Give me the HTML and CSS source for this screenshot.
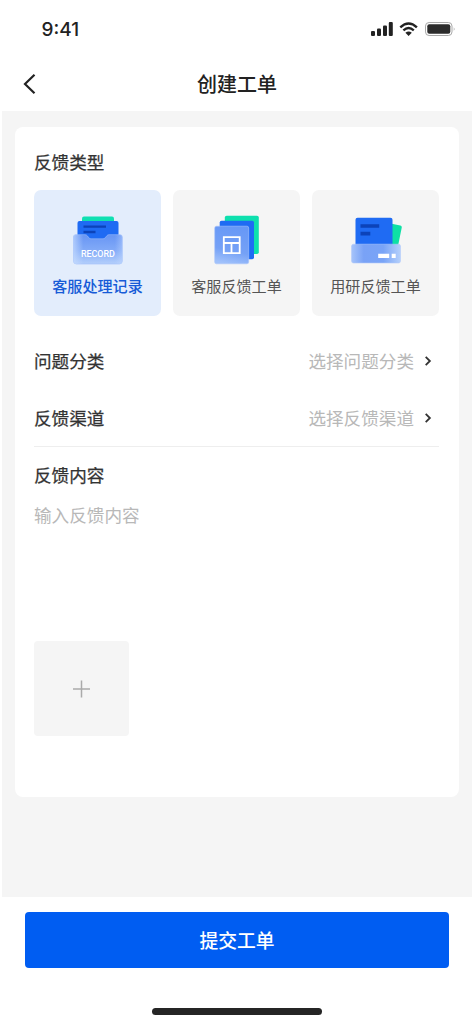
FILE: index.html
```html
<!DOCTYPE html>
<html lang="zh-CN">
<head>
<meta charset="utf-8">
<meta name="viewport" content="width=device-width, initial-scale=1">
<title>创建工单</title>
<link rel="stylesheet" href="styles.css">
</head>
<body>
<div class="screen">
  <header class="status">
    <span class="time">9:41</span>
    <svg class="status-icons" viewBox="370 20 86 18" width="86" height="18" aria-hidden="true">
      <g fill="#222">
        <rect x="371" y="31" width="4" height="5" rx="1.1"/>
        <rect x="377" y="28.5" width="4" height="7.5" rx="1.1"/>
        <rect x="383" y="25.5" width="4" height="10.5" rx="1.1"/>
        <rect x="388.8" y="22" width="4" height="14" rx="1.1"/>
        <path d="M405.4 32.7Q408.6 30.2 411.8 32.7L408.6 35.9Z"/>
      </g>
      <g fill="none" stroke="#222" stroke-width="2.4">
        <path d="M400.3 27.3Q408.6 19.6 416.9 27.3"/>
        <path d="M403.4 30.4Q408.6 25.8 413.8 30.4"/>
      </g>
      <rect x="425.5" y="22.5" width="26.5" height="13" rx="3.6" fill="none" stroke="#a8a8a8"/>
      <rect x="427.3" y="24.3" width="23" height="9.5" rx="2" fill="#2c2c2c"/>
      <path d="M453.8 27.2Q455.4 29 453.8 31Z" fill="#999"/>
    </svg>
  </header>
  <nav class="navbar">
    <svg class="back" viewBox="0 0 14 22" width="14" height="22" aria-hidden="true"><path d="M11.5 1.7L2 11L11.5 20.3"/></svg>
    <h1 class="title">创建工单</h1>
  </nav>
  <main class="content">
    <section class="card">
      <h2 class="label">反馈类型</h2>
      <div class="types">
        <button class="type active">
          <svg viewBox="71.5 214 52 52" width="52" height="52" aria-hidden="true">
            <defs>
              <linearGradient id="record" x1="0" y1="0" x2="0" y2="1"><stop offset="0" stop-color="#6795f4"/><stop offset=".55" stop-color="#83abf8"/><stop offset="1" stop-color="#b4cffb"/></linearGradient>
              <linearGradient id="edge"><stop offset="0" stop-color="#c8ddff" stop-opacity=".7"/><stop offset=".2" stop-color="#c8ddff" stop-opacity="0"/><stop offset=".85" stop-color="#c8ddff" stop-opacity="0"/><stop offset="1" stop-color="#c8ddff" stop-opacity=".4"/></linearGradient>
            </defs>
            <rect x="81.5" y="216.6" width="32" height="9" rx="2" fill="#10e0b2"/>
            <rect x="77" y="221" width="41" height="22" rx="2" fill="#1f6bf3"/>
            <path d="M83 226.7H105.5M83 232H95" stroke="#0c43b9" stroke-width="2.3"/>
            <path d="M75 234.7H84.5Q86 234.7 87 236L88.5 238Q89.3 238.8 90.5 238.8H102.5Q103.7 238.8 104.5 238L106.5 235.6Q107.2 234.7 108.5 234.7H119.5Q121.8 234.7 121.8 237V261Q121.8 264 118.8 264H76Q73 264 73 261V237Q73 234.7 75 234.7Z" fill="url(#record)" stroke="#9dbdfa" stroke-width=".6"/>
            <path d="M75 234.7H84.5Q86 234.7 87 236L88.5 238Q89.3 238.8 90.5 238.8H102.5Q103.7 238.8 104.5 238L106.5 235.6Q107.2 234.7 108.5 234.7H119.5Q121.8 234.7 121.8 237V261Q121.8 264 118.8 264H76Q73 264 73 261V237Q73 234.7 75 234.7Z" fill="url(#edge)"/>
            <text class="record-text" x="97.4" y="257" text-anchor="middle" textLength="34" lengthAdjust="spacingAndGlyphs">RECORD</text>
          </svg>
          <span class="type-name">客服处理记录</span>
        </button>
        <button class="type">
          <svg viewBox="210.5 214 52 52" width="52" height="52" aria-hidden="true">
            <defs><linearGradient id="sheet" x1=".6" y1="0" x2=".4" y2="1"><stop offset="0" stop-color="#6798f6"/><stop offset=".65" stop-color="#75a1f6"/><stop offset="1" stop-color="#a0c1fb"/></linearGradient></defs>
            <rect x="224.3" y="215.8" width="34" height="38.2" rx="1.8" fill="#0ee0ae"/>
            <rect x="219.2" y="220.8" width="34.3" height="38.4" rx="1.8" fill="#1f6bf3"/>
            <rect x="214.2" y="226.2" width="34" height="37.6" rx="1.8" fill="url(#sheet)" stroke="#a9c5fa" stroke-width=".6"/>
            <path d="M223.3 237.2H239.2V253.2H223.3ZM223.3 243H239.2M231 243V253.2" fill="none" stroke="#fff" stroke-width="1.8"/>
          </svg>
          <span class="type-name">客服反馈工单</span>
        </button>
        <button class="type">
          <svg viewBox="349.5 214 52 52" width="52" height="52" aria-hidden="true">
            <defs><linearGradient id="tray"><stop offset="0" stop-color="#a6c4fa"/><stop offset=".25" stop-color="#79a2f6"/><stop offset=".65" stop-color="#79a4f7"/><stop offset="1" stop-color="#b5d0fb"/></linearGradient></defs>
            <path d="M390 223.5L399.8 225.6Q401.6 226 401.2 227.8L397.5 246H388Z" fill="#0ee0a5"/>
            <rect x="355" y="217.8" width="37" height="30" rx="2" fill="#1f6bf3"/>
            <path d="M360 226H378.7M360 233.7H369.8" stroke="#0c43b9" stroke-width="3.7"/>
            <rect x="351" y="244.2" width="49" height="18.8" rx="2" fill="url(#tray)" stroke="#b3cbfa" stroke-width=".6"/>
            <path d="M377.7 255.9H388.7M391.2 255.9H395.2" stroke="#fff" stroke-width="4.2"/>
          </svg>
          <span class="type-name">用研反馈工单</span>
        </button>
      </div>
      <div class="row">
        <span class="label">问题分类</span>
        <span class="choice">选择问题分类</span>
        <svg class="arrow" viewBox="0 0 8 12" width="8" height="12" aria-hidden="true"><path d="M1.7 1.8L5.9 6L1.7 10.2"/></svg>
      </div>
      <div class="row">
        <span class="label">反馈渠道</span>
        <span class="choice">选择反馈渠道</span>
        <svg class="arrow" viewBox="0 0 8 12" width="8" height="12" aria-hidden="true"><path d="M1.7 1.8L5.9 6L1.7 10.2"/></svg>
      </div>
      <div class="feedback">
        <h2 class="label">反馈内容</h2>
        <p class="placeholder">输入反馈内容</p>
      </div>
      <button class="upload" aria-label="添加">
        <svg viewBox="0 0 18 18" width="18" height="18" aria-hidden="true"><path d="M8.5 .5V17.5M0 9H17"/></svg>
      </button>
    </section>
  </main>
  <footer class="footer">
    <button class="submit">提交工单</button>
    <div class="home"></div>
  </footer>
</div>
</body>
</html>
```
FILE: styles.css
```css
* { box-sizing: border-box; }
body {
  margin: 0;
  background: #fff;
  color: #333;
  font-family: "Noto Sans CJK SC", sans-serif;
}
button { border: 0; padding: 0; font: inherit; }
h1, h2, p { margin: 0; }
svg { display: block; flex: none; }
.screen {
  height: 1026px;
  padding: 0 2px;
  display: flex;
  flex-direction: column;
  overflow: hidden;
}
.status {
  height: 58px;
  padding: 0 16px 0 39.5px;
  display: flex;
  align-items: center;
  justify-content: space-between;
}
.time {
  font: 500 19px/24px Inter, sans-serif;
  color: #222;
  padding-top: 1px;
}
.navbar {
  height: 53px;
  padding: 0 21px 2px;
  display: grid;
  grid-template-columns: 14px 1fr 14px;
  align-items: center;
}
.back path { fill: none; stroke: #222; stroke-width: 2.2; }
.title {
  text-align: center;
  font-size: 20px;
  line-height: 30px;
  font-weight: 500;
  color: #222;
}
.content {
  height: 786px;
  padding: 16px 13px 0;
  background: #f5f5f5;
}
.card {
  height: 670px;
  padding: 21px 20px 0 19px;
  border-radius: 8px;
  background: #fff;
}
.label {
  font-size: 17.6px;
  line-height: 28px;
  font-weight: 400;
  -webkit-text-stroke: .25px #333;
  color: #333;
}
.types {
  display: grid;
  grid-template-columns: repeat(3, 1fr);
  gap: 12px;
  margin: 14px 0 16px;
}
.type {
  height: 126px;
  padding-top: 24px;
  border-radius: 7px;
  background: #f5f5f5;
  display: flex;
  flex-direction: column;
  align-items: center;
  gap: 8px;
}
.type.active { background: #e3edfc; }
.type-name { font-size: 15.1px; line-height: 22px; color: #555; white-space: nowrap; }
.active .type-name { font-weight: 500; color: #165bd7; }
.record-text { font: 500 9px Roboto, sans-serif; fill: #fff; }
.row {
  height: 57px;
  display: flex;
  align-items: center;
  padding-right: 7px;
}
.choice { margin-left: auto; margin-right: 10px; font-size: 17.6px; color: #b8b8b8; }
.arrow path { fill: none; stroke: #333; stroke-width: 1.8; }
.feedback {
  height: 195px;
  padding-top: 14px;
  border-top: 1px solid #eee;
}
.placeholder { margin-top: 12px; font-size: 17.6px; line-height: 28px; color: #b8b8b8; }
.upload {
  width: 95px;
  height: 95px;
  border-radius: 4px;
  background: #f5f5f5;
  display: grid;
  place-items: center;
}
.upload path { stroke: #aaa; stroke-width: 1.5; }
.footer {
  flex: 1;
  padding: 15px 23px 0;
  display: flex;
  flex-direction: column;
  align-items: center;
}
.submit {
  width: 100%;
  height: 56px;
  padding-bottom: 2px;
  border-radius: 4px;
  background: #005df2;
  color: #fff;
  font-size: 18.8px;
  font-weight: 500;
}
.home { width: 170px; height: 6.5px; margin-top: 40px; border-radius: 4px; background: #252525; }
```
